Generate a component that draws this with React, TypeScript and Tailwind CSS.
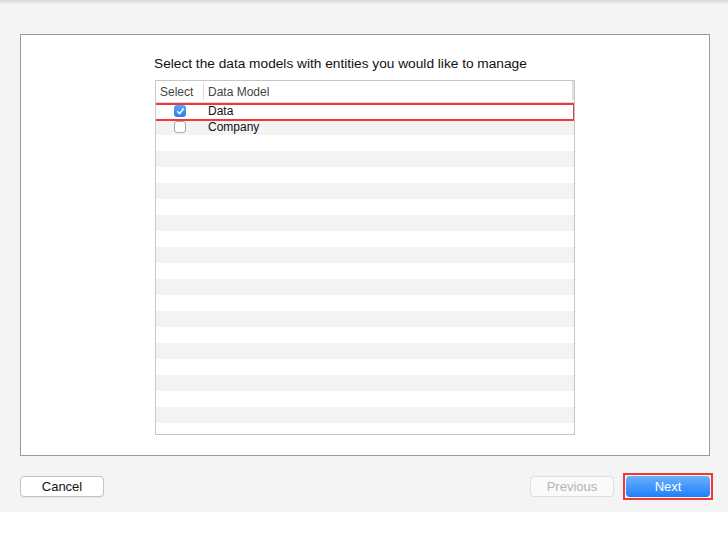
import React from "react";

function Check({ checked }: { checked: boolean }) {
  if (checked) {
    return (
      <div className="w-[12px] h-[12px] rounded-[3px] bg-gradient-to-b from-[#5aa6f8] to-[#2a7ff0] flex items-center justify-center">
        <svg width="9" height="9" viewBox="0 0 9 9">
          <path d="M1.6 4.8 L3.6 6.8 L7.4 1.8" fill="none" stroke="white" strokeWidth="1.5" strokeLinecap="round" strokeLinejoin="round" />
        </svg>
      </div>
    );
  }
  return <div className="w-[12px] h-[12px] rounded-[3px] bg-white border border-[#a9a9a9]" />;
}

export default function App() {
  const rows = Array.from({ length: 21 }, (_, i) => i);
  const names = ["Data", "Company"];
  return (
    <div className="w-[728px] h-[554px] bg-white flex flex-col" style={{ fontFamily: '"Liberation Sans", Arial, sans-serif' }}>
      <div className="h-[512px] bg-[#f4f4f4] flex flex-col">
        <div className="h-[4px] bg-gradient-to-b from-[#d6d6d6] to-[#f4f4f4]" />
        <div className="ml-[20px] mt-[30px] w-[690px] h-[422px] border border-[#9a9a9a] bg-white flex flex-col">
          <div className="ml-[133px] mt-[21px] text-[13.7px] leading-[16px] text-[#111]">
            Select the data models with entities you would like to manage
          </div>
          <div className="ml-[134px] mt-[8px] w-[420px] h-[355px] border border-[#c6c6c6] flex flex-col overflow-hidden">
            <div className="h-[22px] shrink-0 border-b border-[#d9d9d9] flex items-center text-[12px] text-[#444] relative">
              <div className="w-[48px] h-[17px] flex items-center pl-[4px] border-r border-[#dcdcdc]">Select</div>
              <div className="pl-[4px]">Data Model</div>
              <div className="absolute right-[0px] top-[0px] w-[2px] h-[19px] bg-[#dedede]" />
            </div>
            <div className="flex flex-col relative">
              {rows.map((i) => (
                <div key={i} className={`h-[16px] shrink-0 flex items-center text-[12px] text-[#111] ${i % 2 === 1 ? "bg-[#f3f3f3]" : "bg-white"}`}>
                  {i < 2 && (
                    <>
                      <div className="w-[48px] flex justify-center">
                        <Check checked={i === 0} />
                      </div>
                      <div className="pl-[4px]">{names[i]}</div>
                    </>
                  )}
                </div>
              ))}
              <div className="absolute left-[-2px] right-[-1px] top-[0px] h-[18px] border-2 border-[#f2383a]" />
            </div>
          </div>
        </div>
        <div className="mt-[17px] ml-[20px] mr-[15px] flex items-start">
          <button className="mt-[3px] w-[84px] h-[21px] rounded-[4px] border border-[#c4c4c4] bg-white text-[13px] text-[#111] shadow-[0_1px_0_rgba(0,0,0,0.05)]">
            Cancel
          </button>
          <div className="flex-1" />
          <button className="mt-[3px] w-[84px] h-[21px] rounded-[4px] border border-[#dedede] bg-[#fafafa] text-[13px] text-[#b3b3b3]">
            Previous
          </button>
          <div className="ml-[9px] border-2 border-[#f2383a] p-[1px] flex">
            <button className="w-[84px] h-[21px] rounded-[4px] bg-gradient-to-b from-[#69b1fa] to-[#1a7ffb] text-[13px] text-white">
              Next
            </button>
          </div>
        </div>
      </div>
    </div>
  );
}
